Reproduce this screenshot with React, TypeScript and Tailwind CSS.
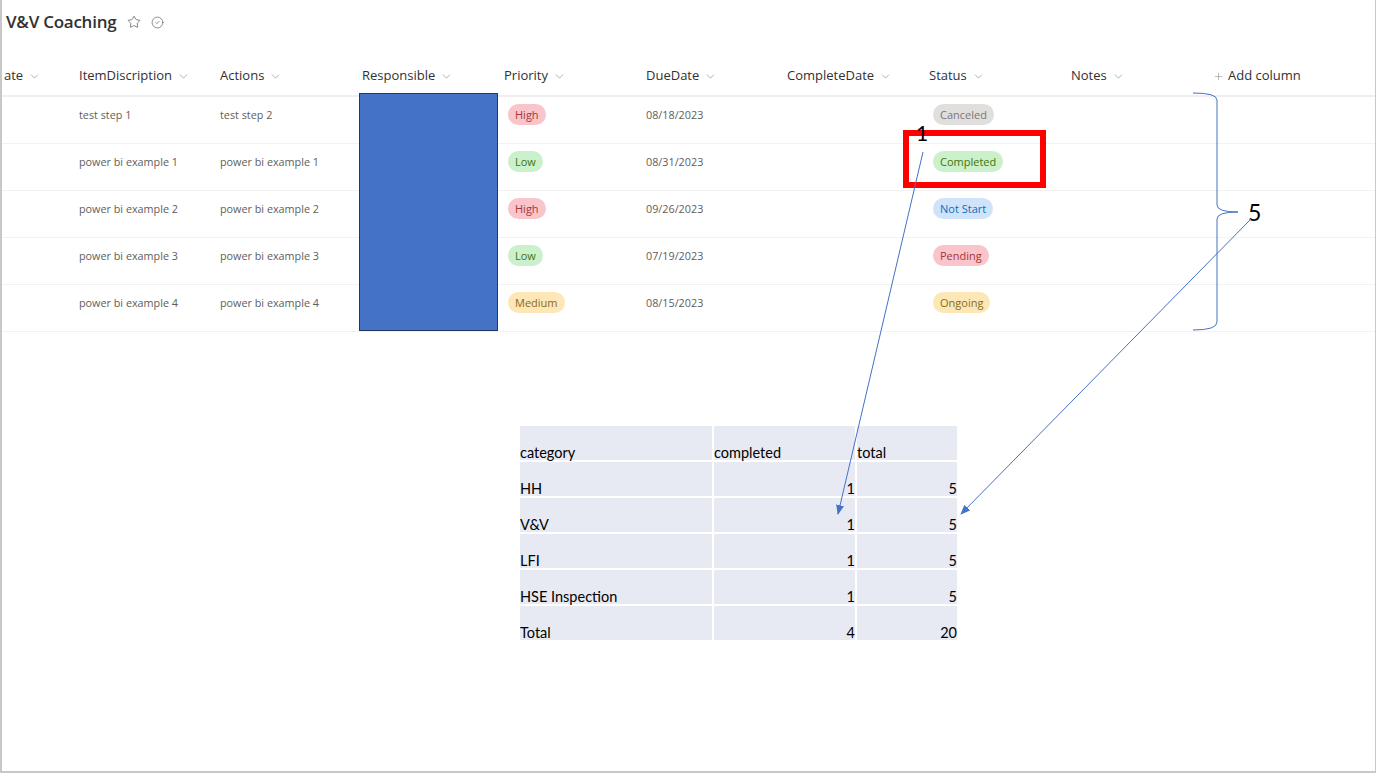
import React from "react";
import { Star, CircleCheck, ChevronDown, Plus } from "lucide-react";

const headFont = { fontFamily: '"Open Sans", "Noto Sans", sans-serif' };

type Pill = { label: string; bg: string; fg: string };

const P = {
  high: { label: "High", bg: "bg-[#f9c4ca]", fg: "text-[#a4373a]" },
  low: { label: "Low", bg: "bg-[#caf0cc]", fg: "text-[#437406]" },
  medium: { label: "Medium", bg: "bg-[#fde7b6]", fg: "text-[#8a6b16]" },
};

const S = {
  canceled: { label: "Canceled", bg: "bg-[#e1dfdd]", fg: "text-[#797775]" },
  completed: { label: "Completed", bg: "bg-[#caf0cc]", fg: "text-[#437406]" },
  notstart: { label: "Not Start", bg: "bg-[#cfe4fa]", fg: "text-[#0f6cbd]" },
  pending: { label: "Pending", bg: "bg-[#f9c4ca]", fg: "text-[#a4373a]" },
  ongoing: { label: "Ongoing", bg: "bg-[#fde7b6]", fg: "text-[#8a6b16]" },
};

const rows: { a: string; b: string; p: Pill; due: string; s: Pill }[] = [
  { a: "test step 1", b: "test step 2", p: P.high, due: "08/18/2023", s: S.canceled },
  { a: "power bi example 1", b: "power bi example 1", p: P.low, due: "08/31/2023", s: S.completed },
  { a: "power bi example 2", b: "power bi example 2", p: P.high, due: "09/26/2023", s: S.notstart },
  { a: "power bi example 3", b: "power bi example 3", p: P.low, due: "07/19/2023", s: S.pending },
  { a: "power bi example 4", b: "power bi example 4", p: P.medium, due: "08/15/2023", s: S.ongoing },
];

const headers = ["ItemDiscription", "Actions", "Responsible", "Priority", "DueDate", "CompleteDate", "Status", "Notes"];

function PillTag({ p }: { p: Pill }) {
  return (
    <span className={`inline-flex h-[21px] items-center rounded-full px-[7px] text-[11px] ${p.bg} ${p.fg}`}>
      {p.label}
    </span>
  );
}

function Head({ label }: { label: string }) {
  return (
    <div className="flex items-center gap-[5px] text-[13px] font-medium text-[#323130]" style={headFont}>
      <span>{label}</span>
      <ChevronDown size={13} strokeWidth={1.2} className="text-[#8a8886]" />
    </div>
  );
}

const gridCols = "grid grid-cols-[77px_141px_142px_142px_142px_141px_142px_142px_142px_1fr]";

const summary = [
  ["HH", "1", "5"],
  ["V&V", "1", "5"],
  ["LFI", "1", "5"],
  ["HSE Inspection", "1", "5"],
  ["Total", "4", "20"],
];

export default function App() {
  const cell = "bg-[#e8eaf3] h-[34px] flex items-end pb-[1px] text-[14.5px] leading-[12px] text-black";
  return (
    <div className="relative w-[1376px] h-[775px] overflow-hidden bg-white">
      <div className="h-[773px] w-[1376px] border-l-2 border-r border-b-2 border-[#c8c8c8] flex flex-col overflow-hidden">
        {/* Title */}
        <div className="h-[44px] flex items-center pl-[4px] gap-[10px]" style={headFont}>
          <span className="text-[17px] font-semibold text-[#323130] tracking-[-0.25px]">V&amp;V Coaching</span>
          <Star size={14} strokeWidth={1.3} className="text-[#605e5c] ml-[1px]" />
          <CircleCheck size={13} strokeWidth={1.3} className="text-[#605e5c]" />
        </div>

        {/* List */}
        <div className="relative mt-[13px]">
          <div className={`${gridCols} h-[40px] items-center border-b-2 border-[#f0efee]`}>
            <div className="pl-[2px]">
              <Head label="ate" />
            </div>
            {headers.map((h) => (
              <Head key={h} label={h} />
            ))}
            <div className="flex items-center gap-[4px] text-[13px] font-medium text-[#323130]" style={headFont}>
              <Plus size={11} strokeWidth={1.2} className="text-[#8a8886]" />
              <span>Add column</span>
            </div>
          </div>
          {rows.map((r, i) => (
            <div
              key={i}
              className={`${gridCols} h-[47px] items-start pt-[7px] border-b border-[#f3f2f1] text-[10.8px] leading-[21px] text-[#605e5c]`}
              style={headFont}
            >
              <div />
              <div>{r.a}</div>
              <div>{r.b}</div>
              <div />
              <div className="pl-[4px]">
                <PillTag p={r.p} />
              </div>
              <div>{r.due}</div>
              <div />
              <div className="pl-[4px]">
                <PillTag p={r.s} />
              </div>
              <div />
              <div />
            </div>
          ))}
          {/* redaction block */}
          <div className="absolute left-[357px] top-[36px] w-[139px] h-[238px] bg-[#4472c4] border border-[#1f3864]" />
        </div>

        {/* Summary table */}
        <div
          className="ml-[518px] mt-[94px] grid grid-cols-[192px_141px_100px] gap-[2px] w-[437px]"
          style={{ fontFamily: 'Lato, "Open Sans", sans-serif' }}
        >
          <div className={cell}>category</div>
          <div className={cell}>completed</div>
          <div className={cell}>total</div>
          {summary.map((s) => (
            <React.Fragment key={s[0]}>
              <div className={cell}>{s[0]}</div>
              <div className={`${cell} justify-end`}>{s[1]}</div>
              <div className={`${cell} justify-end`}>{s[2]}</div>
            </React.Fragment>
          ))}
        </div>
      </div>

      {/* Annotations */}
      <div className="absolute left-[903px] top-[130px] w-[143px] h-[58px] border-[6px] border-[#ff0000]" />
      <div
        className="absolute left-[916px] top-[120px] text-[21px] leading-[26px] text-black"
        style={{ fontFamily: 'Lato, "Open Sans", sans-serif' }}
      >
        1
      </div>
      <div
        className="absolute left-[1248px] top-[198px] text-[23px] leading-[28px] text-black"
        style={{ fontFamily: 'Lato, "Open Sans", sans-serif' }}
      >
        5
      </div>
      <svg className="absolute left-0 top-0 pointer-events-none" width="1376" height="775" viewBox="0 0 1376 775">
        <defs>
          <marker id="ah" markerWidth="10" markerHeight="8" refX="9" refY="4" orient="auto" markerUnits="userSpaceOnUse">
            <path d="M0 0 L10 4 L0 8 Z" fill="#4472c4" />
          </marker>
        </defs>
        <line x1="923" y1="152" x2="838" y2="514" stroke="#4472c4" strokeWidth="1" markerEnd="url(#ah)" />
        <line x1="1251" y1="219" x2="961" y2="514" stroke="#4472c4" strokeWidth="1" markerEnd="url(#ah)" />
        <path
          d="M1193 93 Q1217 93 1217 100 L1217 205 Q1217 212 1238 212 Q1217 212 1217 219 L1217 322 Q1217 330 1193 330"
          fill="none"
          stroke="#4472c4"
          strokeWidth="1"
        />
      </svg>
    </div>
  );
}
